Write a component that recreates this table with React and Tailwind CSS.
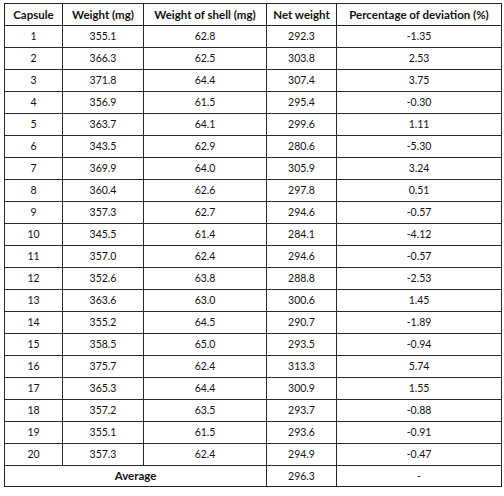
import React from "react";

const rows = [
  ["1", "355.1", "62.8", "292.3", "-1.35"],
  ["2", "366.3", "62.5", "303.8", "2.53"],
  ["3", "371.8", "64.4", "307.4", "3.75"],
  ["4", "356.9", "61.5", "295.4", "-0.30"],
  ["5", "363.7", "64.1", "299.6", "1.11"],
  ["6", "343.5", "62.9", "280.6", "-5.30"],
  ["7", "369.9", "64.0", "305.9", "3.24"],
  ["8", "360.4", "62.6", "297.8", "0.51"],
  ["9", "357.3", "62.7", "294.6", "-0.57"],
  ["10", "345.5", "61.4", "284.1", "-4.12"],
  ["11", "357.0", "62.4", "294.6", "-0.57"],
  ["12", "352.6", "63.8", "288.8", "-2.53"],
  ["13", "363.6", "63.0", "300.6", "1.45"],
  ["14", "355.2", "64.5", "290.7", "-1.89"],
  ["15", "358.5", "65.0", "293.5", "-0.94"],
  ["16", "375.7", "62.4", "313.3", "5.74"],
  ["17", "365.3", "64.4", "300.9", "1.55"],
  ["18", "357.2", "63.5", "293.7", "-0.88"],
  ["19", "355.1", "61.5", "293.6", "-0.91"],
  ["20", "357.3", "62.4", "294.9", "-0.47"],
];

const headers = [
  "Capsule",
  "Weight (mg)",
  "Weight of shell (mg)",
  "Net weight",
  "Percentage of deviation (%)",
];

export default function App() {
  return (
    <div className="w-[504px] h-[496px] bg-white pt-[3px] pl-[4px] font-['Lato','Liberation_Sans',sans-serif] text-[#111]">
      <table className="table-fixed border-collapse w-[497px] border border-[#111]">
        <colgroup>
          <col className="w-[58px]" />
          <col className="w-[81px]" />
          <col className="w-[123px]" />
          <col className="w-[70px]" />
          <col className="w-[165px]" />
        </colgroup>
        <thead>
          <tr className="h-[22px]">
            {headers.map((h) => (
              <th
                key={h}
                className="border border-[#222] p-0 text-center align-middle text-[11.5px] font-bold leading-none whitespace-nowrap"
              >
                {h}
              </th>
            ))}
          </tr>
        </thead>
        <tbody>
          {rows.map((r) => (
            <tr key={r[0]} className="h-[22px]">
              {r.map((c, i) => (
                <td
                  key={i}
                  className="border border-[#2a2a2a] p-0 text-center align-middle text-[10.5px] leading-none"
                >
                  {c}
                </td>
              ))}
            </tr>
          ))}
          <tr className="h-[21px]">
            <td
              colSpan={3}
              className="border border-[#222] p-0 text-center align-middle text-[11.5px] font-bold leading-none"
            >
              Average
            </td>
            <td className="border border-[#222] p-0 text-center align-middle text-[10.5px] leading-none">
              296.3
            </td>
            <td className="border border-[#222] p-0 text-center align-middle text-[10.5px] leading-none">
              -
            </td>
          </tr>
        </tbody>
      </table>
    </div>
  );
}
